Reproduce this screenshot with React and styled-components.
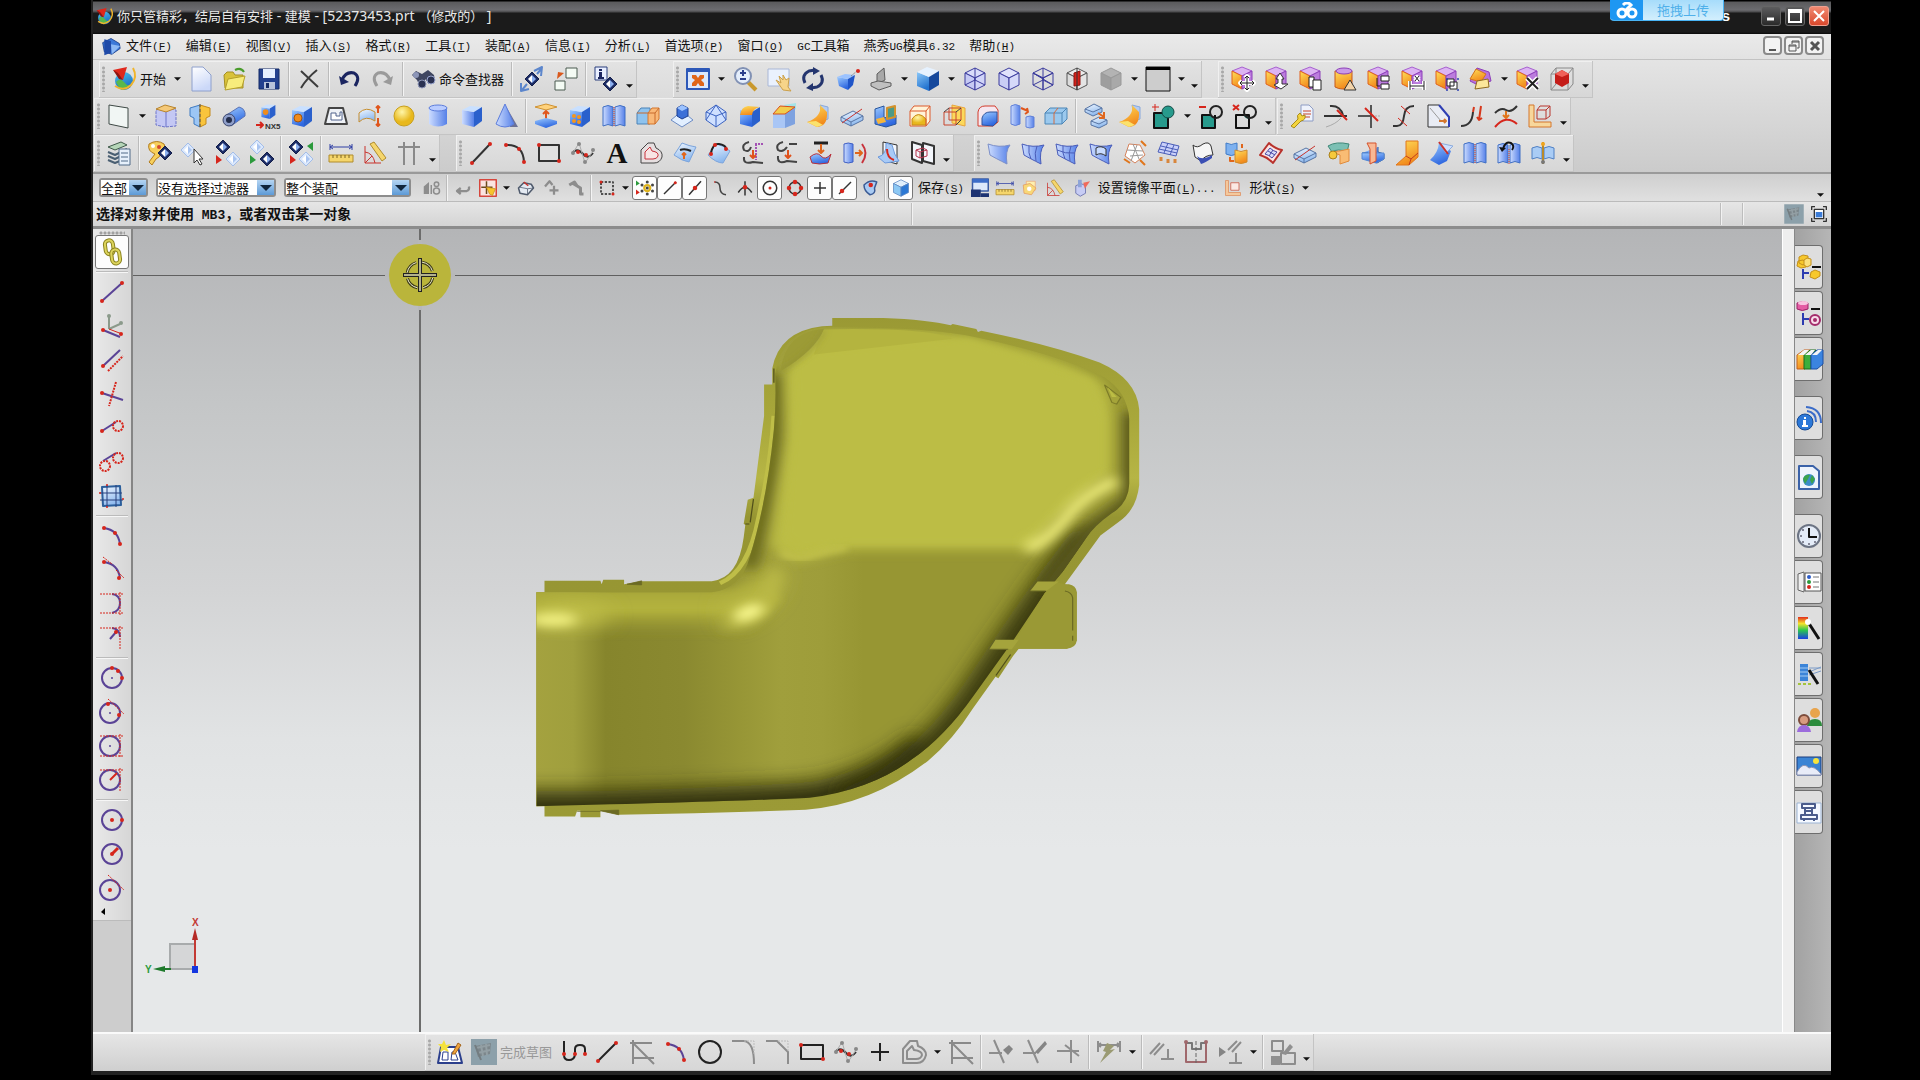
import React from 'react'
import styled, { createGlobalStyle, css } from 'styled-components'

const GlobalStyle = createGlobalStyle`
  * { box-sizing: border-box; }
  body {
    margin: 0;
    background: #000;
    color: #111;
    font-family: "Noto Sans CJK SC", sans-serif;
    font-size: 13px;
    line-height: 20px;
  }
  button, select { font: inherit; color: inherit; }
`

/* ---------- frame ---------- */

const Page = styled.div`
  display: flex;
  flex-direction: column;
  min-height: 100vh;
  padding: 0 89px 5px 91px;
`

const Frame = styled.div`
  position: relative;
  flex: 1;
  display: flex;
  flex-direction: column;
  border: solid #222;
  border-width: 0 0 4px 2px;
  background: #d8d8d8;
`

const TitleBar = styled.header`
  display: flex;
  align-items: center;
  height: 34px;
  padding: 0 2px 2px 3px;
  gap: 4px;
  color: #e8e8e8;
  background: linear-gradient(#000 1px, #5a5a5c 2px, #6c6c70 10px, #4a4a4c 12px, #1b1b1b 13px, #1b1b1b 32px, #0a0a0a);
`

const Title = styled.h1`
  flex: 1;
  margin: 0;
  font-size: 13px;
  font-weight: 400;
  line-height: 20px;
  white-space: pre;
`

const TitleLatin = styled.span`
  font-family: "Noto Sans", sans-serif;
  font-size: 14px;
`

const Upload = styled.button`
  position: absolute;
  top: 0;
  right: 107px;
  display: flex;
  width: 114px;
  height: 21px;
  padding: 0;
  border: 1px solid #49b4f5;
  border-width: 0 1px 1px 0;
  border-radius: 0 0 4px 4px;
  overflow: hidden;
  color: #4fb0ea;
  background: linear-gradient(#a6dcfb, #d3effd);
  line-height: 19px;
`

const UploadLogo = styled.span`
  display: grid;
  place-items: center;
  width: 33px;
  height: 21px;
  margin-right: 14px;
  background: #1e97f2;
`

const Tail = styled.span`
  margin-right: 27px;
  font: bold 15px/20px "Liberation Sans", sans-serif;
  color: #fff;
`

const WinButton = styled.button`
  display: grid;
  place-items: center;
  width: 20px;
  height: 20px;
  margin-left: 0;
  padding: 0;
  border: 1px solid ${p => p.$close ? '#f0a090' : '#666'};
  border-radius: 3px;
  background: ${p => p.$close ? 'linear-gradient(#f08a72, #d9482c)' : 'linear-gradient(#5c5c5e, #2a2a2a)'};
`

const MdiButton = styled(WinButton)`
  width: 19px;
  height: 19px;
  margin: 0 0 0 2px;
  border: 2px solid #8a8a8a;
  border-radius: 4px;
  background: #f3f3f3;
`

const MenuBar = styled.nav`
  display: flex;
  align-items: center;
  height: 26px;
  padding: 0 7px 2px 8px;
  border-bottom: 1px solid #c2c2c2;
  background: linear-gradient(#eaeaea, #e2e2e2);
`

const MenuItem = styled.button`
  height: 22px;
  margin-left: ${p => p.$first ? 5 : 14}px;
  padding: 0;
  border: 0;
  background: none;
  white-space: pre;
`

const Spacer = styled.div`
  flex: 1;
`

const Latin = styled.span`
  font-family: "Liberation Mono", monospace;
  font-size: ${p => p.$big ? 13 : 11}px;
  white-space: pre;
`

/* ---------- tool bars ---------- */

const Rows = styled.div`
  padding-top: 1px;
  background: linear-gradient(#e4e4e4, #cbcbcb);
  border-bottom: 2px solid #9a9a9a;
`

const Row = styled.div`
  display: flex;
  height: 37px;
  padding-left: ${p => p.$pad || 0}px;
`

const Group = styled.div`
  display: flex;
  align-items: center;
  margin-left: ${p => p.$gap || 1}px;
  border: solid #c4c4c4;
  border-width: 0 1px 1px 0;
  box-shadow: inset 1px 1px #f0f0f0;
  background: linear-gradient(#e3e3e3, #d7d7d7);
`

const Grip = styled.span`
  width: 8px;
  height: 26px;
  background: radial-gradient(circle, #a8a8a8 1px, transparent 2px) 2px 0 / 5px 4px repeat-y;
`

const Sep = styled.span`
  width: 2px;
  height: ${p => p.$short ? 26 : 34}px;
  margin: 0 2px;
  border-left: 1px solid #bbb;
  border-right: 1px solid #f4f4f4;
`

const Tool = styled.button`
  display: flex;
  align-items: center;
  justify-content: center;
  width: ${p => p.$text ? 'auto' : p.$small ? '25px' : '34px'};
  height: ${p => p.$small ? 24 : 34}px;
  padding: 0 ${p => p.$text && !p.$small ? 5 : 0}px;
  border: ${p => p.$on ? '1px solid #777' : '0'};
  border-radius: 3px;
  background: ${p => p.$on ? '#fdfdfd' : 'none'};
  color: ${p => p.$dim ? '#999' : '#111'};
  white-space: pre;
  svg { flex: none; }
  ${p => p.$text && p.$small && css`
    padding: 0 4px;
  `}
`

const Drop = styled.button`
  display: flex;
  align-items: ${p => p.$low ? 'flex-end' : 'center'};
  justify-content: center;
  width: 13px;
  height: 26px;
  padding: 0 0 ${p => p.$low ? 4 : 0}px;
  border: 0;
  background: none;
`

const Caption = styled.span`
  margin-left: ${p => p.$gap || 4}px;
`

const SelectBar = styled.div`
  display: flex;
  align-items: center;
  height: 28px;
  padding: 0 4px 0 6px;
  border-bottom: 1px solid #bbb;
  background: linear-gradient(#cfcfcf, #e0e0e0);
`

const Combo = styled.label`
  display: flex;
  width: ${p => p.$w}px;
  height: 19px;
  margin-right: 8px;
  border: 2px solid #8d8d8d;
  border-radius: 3px;
  background: #fff;
`

const Select = styled.select`
  flex: 1;
  min-width: 0;
  padding: 0;
  border: 0;
  background: #fff;
  appearance: none;
  line-height: 15px;
`

const ComboArrow = styled.span`
  display: grid;
  place-items: center;
  width: 17px;
  background: linear-gradient(#b5d5f3, #5d9ad6);
`

const StatusBar = styled.div`
  display: flex;
  align-items: center;
  height: 24px;
  padding: 0 0 0 3px;
  background: linear-gradient(#e6e6e6, #d4d4d4);
  font-size: 14px;
  font-weight: 700;
`

const Prompt = styled.div`
  width: 47%;
  white-space: pre;
`

const Divider = styled.span`
  width: 2px;
  height: 22px;
  margin-right: ${p => p.$after || 0}px;
  border-left: 1px solid #bdbdbd;
  border-right: 1px solid #f2f2f2;
`

/* ---------- work area ---------- */

const Work = styled.main`
  flex: 1;
  display: flex;
  border-top: 3px solid #8c8c8c;
`

const Side = styled.aside`
  width: 40px;
  border-right: 2px solid #858585;
  background: #cdcdcd;
`

const SideTools = styled.div`
  display: flex;
  flex-direction: column;
  align-items: center;
  padding: 2px 1px 5px 0;
  border-bottom: 1px solid #bbb;
  background: linear-gradient(90deg, #e9e9e9, #d6d6d6);
`

const SideGrip = styled.span`
  width: 26px;
  height: 4px;
  background: radial-gradient(circle, #a0a0a0 1px, transparent 2px) 0 0 / 4px 4px repeat-x;
`

const SideSep = styled.span`
  width: 32px;
  height: 2px;
  margin: 2px 0;
  border-top: 1px solid #bbb;
  border-bottom: 1px solid #f6f6f6;
`

const SideMore = styled.div`
  align-self: flex-start;
  padding-left: 8px;
  height: 10px;
  line-height: 10px;
`

const Canvas = styled.section`
  position: relative;
  flex: 1;
  overflow: hidden;
  background: linear-gradient(#b4b5b7, #c4c6c7 175px, #d3d4d5 360px, #e1e3e4 510px, #e6e8e9 620px);
`

const LineV = styled.div`
  position: absolute;
  top: 0;
  bottom: 0;
  left: 286px;
  width: 2px;
  background: #6c6c6c;
`

const LineH = styled.div`
  position: absolute;
  left: 0;
  right: 0;
  top: 46px;
  height: 1px;
  background: #606060;
`

const Part = styled.svg`
  position: absolute;
  left: 387px;
  top: 72px;
`

const Pointer = styled.svg`
  position: absolute;
  left: 252px;
  top: 11px;
`

const Triad = styled.svg`
  position: absolute;
  left: 10px;
  bottom: 56px;
`

const Strip = styled.div`
  width: 13px;
  border-left: 1px solid #fff;
  border-right: 1px solid #888;
  background: #eee;
`

const Tabs = styled.aside`
  display: flex;
  flex-direction: column;
  align-items: flex-start;
  gap: 2px;
  width: 36px;
  padding-top: 16px;
  background: linear-gradient(90deg, #a2a2a2, #b6b6b6);
`

const Tab = styled.button`
  display: grid;
  place-items: center;
  width: 28px;
  height: 44px;
  margin-bottom: ${p => p.$last ? 13 : 0}px;
  padding: 0;
  border: solid #6e6e6e;
  border-width: 1px 1px 1px 0;
  border-radius: 0 4px 4px 0;
  background: #dedede;
`

const Bottom = styled.footer`
  display: flex;
  height: 39px;
  padding-left: 331px;
  border-top: 2px solid #fafafa;
  background: linear-gradient(#e6e6e6, #cfcfcf);
`

/* ---------- drawing helpers ---------- */

const P = ({ d, f = 'none', s = 'none', w = 1, dash }) => (
  <path d={d} fill={f} stroke={s} strokeWidth={w} strokeDasharray={dash} strokeLinejoin='round' />
)
const O = ({ x = 12, y = 12, r = 9, f = 'none', s = 'none', w = 1, dash }) => (
  <circle cx={x} cy={y} r={r} fill={f} stroke={s} strokeWidth={w} strokeDasharray={dash} />
)
const Dots = ({ at, c = '#d6261c', r = 2 }) => at.map(([x, y]) => (
  <circle key={x + '-' + y} cx={x} cy={y} r={r} fill={c} />
))
const Iso = ({ t, l, r, s }) => (
  <>
    <P d='M12 1L22 6 12 11 2 6z' f={t} s={s} />
    <P d='M2 6L12 11V23L2 18z' f={l} s={s} />
    <P d='M22 6L12 11V23L22 18z' f={r} s={s} />
  </>
)
const Box = ({ l = 'url(#blue)', r = '#2a60cc', t = '#c9e0ff' }) => (
  <>
    <P d='M2 6L14 8V23L2 20z' f={l} />
    <P d='M2 6L10 2 22 3 14 8z' f={t} />
    <P d='M14 8L22 3V17L14 23z' f={r} />
  </>
)
const Synch = ({ children }) => (
  <>
    <P d='M11 0L21 4 11 9 1 4z' f='#dcb4f2' s='#a65fd0' />
    <P d='M1 4L11 9V22L1 17z' f='url(#orange)' s='#e0601c' />
    <P d='M21 4L11 9V22L21 17z' f='#bb7cdd' s='#8d3fba' />
    {children}
  </>
)
const Over = ({ d, w = 2 }) => (
  <>
    <P d={d} s='#fff' w={w + 3} />
    <P d={d} s='#222' w={w} />
  </>
)
const Diamond = ({ x = 0, y = 0, pale }) => (
  <g transform={`translate(${x} ${y})`}>
    <P d='M6 -1L13 6 6 13 -1 6z' f={pale ? '#dbe8fc' : '#1c2c66'} s={pale ? '#a3bde8' : '#141f4a'} />
    <P d='M6 2V10L2 6z' f='#fff' />
    <P d='M6 2V10L10 6z' f={pale ? '#a9c4f0' : '#8cb0f0'} />
  </g>
)
const Axes = '#5a4396'
const Red = '#d6261c'
const Gray = '#8d8d8d'

const ICONS = {
  logo: <><O x={12} y={14} r={9} f='url(#globe)' /><P d='M4 15Q8 10 12 15T19 18Q14 24 8 22z' f='#58b84c' /><P d='M1 3L15 0 11 13z' f='#e0281c' /><P d='M1 3L7 12 11 13 6 6z' f='#8e1410' /><P d='M21 1Q26 10 19 18 12 25 3 19' s='#f0b52c' w={2} /></>,
  doc: <P d='M3 0H14L22 8V24H3z' f='url(#paper)' s='#8ea0cc' />,
  open: <><P d='M1 8L4 5H10L12 8H20V21H2z' f='#d9c23a' s='#a58f22' /><P d='M5 12L22 9 19 20 2 23z' f='#f7ec7c' s='#b5a02a' /><P d='M12 3Q18 0 21 5' s='#4a9c2c' w={2} /></>,
  save: <><P d='M2 2H22V22H2z' f='#23408e' s='#152a66' /><P d='M6 2H18V11H6z' f='#e6efff' /><P d='M7 15H18V22H7z' f='#b9c3da' /><P d='M9 16H12V21H9z' f='#152a66' /></>,
  cut: <><P d='M4 4L21 20M20 3Q10 11 4 21' s='#3c3c3c' w={2} /></>,
  undo: <><P d='M5 13Q9 4 17 6 24 10 18 19' s='#1b2560' w={3} /><P d='M2 9L4 18 12 15z' f='#1b2560' /></>,
  redo: <><P d='M19 13Q15 4 7 6 0 10 6 19' s='#9a9a9a' w={3} /><P d='M22 9L20 18 12 15z' f='#9a9a9a' /></>,
  find: <><P d='M1 8L5 4 11 7 17 3 23 8 24 14 18 17 14 12 14 19 9 20 6 13z' f='#3f4660' /><O x={5} y={8} r={3} f='#8d96b8' /><O x={11} y={17} r={4} f='#2b3252' s='#8d96b8' /><O x={20} y={13} r={4} f='#2b3252' s='#9aa6d0' /></>,
  reattach: <><Diamond x={6} y={6} /><P d='M14 4L22 0 21 9M1 16L1 24 9 22M17 7L22 1M2 23L7 17' s='#5c86cc' w={2} /></>,
  swap: <><P d='M12 1H23V11H12z' f='#f4fbf4' s='#4a5a50' /><P d='M1 14H11V23H1z' f='#f4fbf4' s='#4a5a50' /><P d='M3 12L10 6 4 5z' f='#d9581c' /></>,
  info: <><P d='M1 0H13V13H1z' f='#e8eeff' s='#2b3f7c' /><P d='M5 2H8V4H5zM5 5H8V10H10V12H4V10H5z' f='#1b2560' /><Diamond x={10} y={11} /></>,
  fit: <><P d='M1 2H23V22H1z' f='#dce8fc' s='#2d58b8' w={2} /><P d='M1 1H23V5H1z' f='#2d58b8' /><P d='M6 8H10L12 11 14 8H18V11L15 13 18 16V19H14L12 16 10 19H6V16L9 13 6 11z' f='#e0661a' /></>,
  zoom: <><P d='M15 15L23 23' s='#c9982c' w={4} /><O x={10} y={9} r={8} f='#e4eefc' s='#8191b4' w={2} /><P d='M10 3V9M7 6H13M7 12H13' s='#2b3f8c' w={2} /></>,
  pan: <><P d='M1 2H22V19H1z' f='#eaf1fd' s='#a9b7d6' /><P d='M9 13L14 16 12 9 16 13 16 8 19 13 22 11 21 20 24 24 16 23z' f='#f7d489' s='#cba04c' /></>,
  rotate: <><P d='M4 16Q0 8 8 4L14 3M20 8Q24 16 16 20L10 21' s='#24356e' w={3} /><P d='M12 0L19 4 12 8zM12 16L5 21 12 24z' f='#24356e' /></>,
  boxdot: <><P d='M2 10L13 12V23L4 19z' f='url(#blue)' /><P d='M2 10L10 7 20 8 13 12z' f='#9cc3ff' /><P d='M13 12L20 8 18 18 13 23z' f='#1f55c8' /><P d='M16 9L22 4' s='#888' dash='2 1' /><Dots at={[[23, 4]]} /></>,
  persp: <><P d='M8 7L15 1 16 13 8 17z' f='#a8a8a8' s='#5c5c5c' /><P d='M2 16L9 14 22 16V19L10 23 2 19z' f='#c0c0c0' s='#5c5c5c' /></>,
  shaded: <><P d='M1 5L13 10V24L1 19z' f='url(#blueD)' /><P d='M1 5L11 0 23 4 13 10z' f='#e6f2ff' /><P d='M13 10L23 4V18L13 24z' f='#15489c' /></>,
  wireA: <><Iso t='#d9dcfa' l='#c6caf4' r='#d0d4f8' s='#3a3a9c' /><P d='M2 18L12 13 22 18M12 1V13' s='#3a3a9c' /></>,
  wireB: <Iso t='#e0e2fb' l='#c9cdf5' r='#d6d9f9' s='#3a3a9c' />,
  wireC: <><Iso t='none' l='none' r='none' s='#3a3a9c' /><P d='M2 18L12 13 22 18M12 1V13M2 6L22 18' s='#3a3a9c' /></>,
  section: <><Iso t='#ececec' l='#dcdcdc' r='#e4e4e4' s='#555' /><P d='M9 6L15 4V18L9 19z' f='#d42018' s='#8e1410' /><P d='M12 1V23' s='#333' /></>,
  grayCube: <Iso t='#b3b3b3' l='#9e9e9e' r='#a9a9a9' s='#999' />,
  blackFrame: <><P d='M0 0H24V24H0z' f='#cdcdcd' s='#111' /><P d='M0 0H24V3H0z' f='#000' /></>,
  sMove: <Synch><Over w={1} d='M16 9V23M9 16H23M14 11L16 9 18 11M14 21L16 23 18 21M11 14L9 16 11 18M21 14L23 16 21 18' /></Synch>,
  sPull: <Synch><P d='M15 6L19 12H17V17H23L16 22 9 18 13 16V12H11z' f='#fff' s='#333' /></Synch>,
  sCopy: <Synch><P d='M10 10H15V13H22V23H14V20H10z' f='#fff' s='#222' /><P d='M14 20V13H15' s='#222' /></Synch>,
  sCyl: <><P d='M2 4V20Q9 24 19 20V4z' f='url(#orange)' s='#c5591a' /><ellipse cx='11' cy='4' rx='8' ry='3' fill='#c99ae8' stroke='#8d3fba' /><P d='M17 13L23 23H11z' f='#f3d3a8' s='#333' /></>,
  sReplace: <Synch><P d='M14 9H22V14H14zM14 17H22V22H14z' f='#fff' s='#222' /><P d='M10 11V19H13' s='#222' /></Synch>,
  sDim: <Synch><Over w={1} d='M9 14V23M23 14V23M9 19H23M14 9L18 14M18 9L14 14' /></Synch>,
  sPattern: <Synch><P d='M12 12H19V19H12zM15 15H22V22H15z' f='#fff' s='#222' /><Dots at={[[12, 12], [23, 12], [12, 23], [23, 23]]} c='#2c3fb0' r={1} /></Synch>,
  sTilt: <><P d='M8 1L20 5 22 14 9 18 1 14z' f='#b872dc' s='#8d3fba' /><P d='M7 2L17 7 12 15 1 12z' f='url(#orange)' s='#d4741c' /><P d='M8 14L19 12 20 20 6 22z' f='#fbe69a' s='#8f6a1c' /></>,
  sDel: <Synch><Over d='M11 11L22 22M22 11L11 22' /></Synch>,
  sRed: <><P d='M6 1H23V17L18 23H1V7z' f='none' s='#888' /><P d='M1 7H18V23M18 7L23 1M6 1V17L1 23' s='#888' /><P d='M5 7L12 3 19 7V16L12 20 5 16z' f='#c41c18' /><P d='M5 7L12 3 19 7 12 10z' f='#f06058' /></>,

  sheet: <P d='M2 1L21 4V24L2 20z' f='#f1f6f4' s='#3f4a46' />,
  extrude: <><P d='M2 6L14 3 22 6V22L11 23 2 21z' f='#c4c8f4' s='#6d74c9' dash='3 1' /><P d='M2 5L11 1 22 4 12 8z' f='#f5c978' s='#b8842c' /><P d='M12 8V23' s='#6d74c9' /></>,
  revolve: <><P d='M2 4L12 1V23L6 20V14L2 12z' f='#9cc6f5' s='#3f7bc2' /><P d='M12 1L22 4V12L18 14V20L12 23z' f='#f9c43c' s='#c38a1c' /><P d='M12 0V24' s='#555' dash='3 2' /></>,
  tube: <><P d='M3 12L17 3Q24 5 23 12L9 22z' f='url(#blue)' s='#5b73b4' /><O x={7} y={16} r={6} f='#8e9ec9' s='#39446b' /><O x={7} y={16} r={3} f='#222c4a' /></>,
  nx5: <><g transform='translate(4 -1) scale(.7)'><Box /><O x={8} y={13} r={4} f='#f08c1c' /></g><P d='M0 21H6M4 18L7 21 4 24' s={Red} w={2} /><text x='9' y='25' fontSize='8' fontWeight='700' fontFamily='Liberation Sans, sans-serif' fill='#333'>NX5</text></>,
  holeBox: <><Box /><O x={8} y={14} r={4} f='#f08c1c' s='#a4550c' /></>,
  emboss: <><P d='M5 4H19L23 20H1z' f='#eef1f6' s='#444' w={2} /><P d='M7 9H12V12H16V8H18V16H7z' f='#fff' s='#50628c' /></>,
  offset: <><P d='M1 9Q8 2 17 8V17Q8 11 1 18z' f='url(#paleblue)' s='#c78d2c' /><P d='M20 9V2M18 4L20 2 22 4M20 14V22M18 20L20 22 22 20' s='#e0561c' w={2} /></>,
  sphere: <O r={10} f='url(#ball)' s='#c9a01c' />,
  cylinder: <><P d='M3 4V20Q12 25 21 20V4z' f='url(#blueH)' /><ellipse cx='12' cy='4' rx='9' ry='3' fill='#b9ccff' stroke='#5c7ddc' /></>,
  block: <Box l='url(#blueH)' />,
  cone: <><P d='M13 4L24 23H16z' f='#6b7196' /><P d='M11 0L20 20Q11 26 2 20z' f='url(#blueH)' s='#5c7ddc' /></>,
  pullup: <><P d='M1 3L12 0 23 3 12 6z' f='#ffd27c' s='#cf9232' /><P d='M12 15V7M9 10L12 7 15 10' s='#e0561c' w={2} /><P d='M1 17L12 14 23 17V20L12 24 1 20z' f='url(#blue)' /></>,
  boxholes: <><Box /><Dots at={[[6, 12], [11, 13], [6, 17], [11, 18]]} c='#f5961c' /></>,
  sew: <><P d='M1 3Q6 0 11 3V22Q6 19 1 22z' f='url(#blueH)' s='#3f6fc4' /><P d='M13 3Q18 0 23 3V22Q18 19 13 22z' f='url(#blueH)' s='#3f6fc4' /><P d='M12 3V23' s='#d63a2c' dash='1 1' /></>,
  split: <><P d='M1 9L5 4H14V20H1z' f='#8fc3ee' s='#4a83b8' /><P d='M12 9L16 4H23V15L19 20H12z' f='#f9b878' s='#d4762c' /><P d='M1 9H19V20M19 9L23 4' s='#c96a2c' /></>,
  pocket: <><P d='M12 7L23 16 12 23 1 16z' f='#e2efff' s='#6d8cc4' /><P d='M7 4L12 1 18 4V12L12 15 7 12z' f='#3b70d8' s='#1d3f90' /><P d='M7 4L12 1 18 4 12 7z' f='#9cc3ff' /></>,
  gem: <><P d='M12 1L22 8V16L12 23 2 16V8z' f='#cfe0ff' s='#3b62c0' /><P d='M2 8L12 12 22 8M12 12V23M2 16L12 1 22 16' s='#3b62c0' /></>,
  blend: <><Box /><P d='M2 11Q3 3 10 2L22 3Q15 4 14 11z' f='url(#orange)' /></>,
  chamfer: <><P d='M12 1L24 -1V5L18 9z' f='#a4e4e8' /><P d='M1 10H13V24H1z' f='#a9c6f5' /><P d='M13 10L23 3V20L13 24z' f='#7ea2e0' /><P d='M1 10L8 2 23 3 13 10z' f='#f3cd4c' s='#d8501c' /></>,
  sweep: <><P d='M14 1L22 3V15L17 17z' f='#b4ccf2' s='#88a8dc' /><P d='M14 1Q16 13 1 18L11 23Q22 22 21 8z' f='url(#orange)' /><P d='M1 18L10 17 17 21 11 23z' f='#fbe26c' /></>,
  trim: <><P d='M1 13L13 7 23 12V16L11 22 1 17z' f='url(#paleblue)' s='#5674a4' /><P d='M1 13L11 18 23 12M11 18V22' s='#5674a4' /><P d='M2 19L22 5' s='#c8322c' w={1} /></>,
  sub: <><P d='M1 5L10 2V14L22 11V20L12 23 1 20z' f='url(#blue)' s='#28559c' /><P d='M13 4L21 2V13L13 15z' f='#4c9a86' s='#d4922c' w={2} /><P d='M2 15L10 13 12 18 4 20z' f='#f5b53c' /></>,
  domeA: <><P d='M2 7L6 2H22V17L18 22H2z' f='#fff3d8' s='#dd5a2c' /><P d='M4 21V15Q10 6 18 15V21z' f='url(#ball)' s='#c88a1c' /><P d='M2 7H18V22M18 7L22 2' s='#dd5a2c' /></>,
  domeB: <><P d='M10 1L23 4V22L10 19z' f='#fbd95c' s='#e8a43c' /><P d='M2 8H14V21H2zM7 4H19V16H7z' f='none' s='#c8442c' /><P d='M2 8L7 4M14 8L19 4M14 21L19 16' s='#444' /></>,
  domeC: <><P d='M2 8Q3 2 9 2H19L22 6V18L17 22H2z' f='#f5e7ef' s='#d33c2c' /><P d='M6 21V14Q8 8 14 8H21V18L17 22z' f='url(#blue)' s='#31549c' /></>,
  cylPair: <><P d='M1 2Q5 -1 10 2V20Q5 23 1 20z' f='url(#blueH)' s='#6080d8' /><P d='M16 13Q20 11 24 13V23Q20 25 16 23z' f='url(#blueH)' s='#6080d8' /><P d='M11 4L18 7M15 10L18 8 17 4' s='#e0561c' w={2} /></>,
  slab: <><P d='M1 9L6 4H23V15L18 20H1z' f='#9bc9ee' s='#4d86b6' /><P d='M1 9H18V20M18 9L23 4' s='#4d86b6' /><P d='M10 20V9L14 4' s='#d66a3c' /></>,
  slabs: <><P d='M1 5L10 0 18 4V8L9 12 1 8z' f='url(#paleblue)' s='#5674a4' /><P d='M7 17L15 13 23 16V20L15 24 7 21z' f='url(#paleblue)' s='#5674a4' /><P d='M1 5L9 8 18 4M7 17L15 20 23 16' s='#5674a4' /><P d='M14 9L20 13M20 8V14H15' s='#e0661c' w={2} /></>,
  unite: <><P d='M2 9H16V24H2z' f='#279a8c' s='#111' w={2} /><O x={16} y={8} r={6} f='#279a8c' s='#134a44' /><P d='M0 3H7M3 0V7' s={Red} w={1} /></>,
  minus: <><P d='M3 11H16V24H3z' f='#279a8c' s='#111' w={2} /><O x={17} y={8} r={6} f='#d8d8d8' s='#222' w={2} /><P d='M16 11V14' s='#111' w={2} /><P d='M0 3H7' s={Red} w={2} /></>,
  inter: <><P d='M16 11V15Q11 14 11 11z' f='#279a8c' /><P d='M3 11H16V24H3z' s='#111' w={2} /><O x={17} y={8} r={6} s='#222' w={2} /><P d='M0 1L6 6M6 1L0 6' s={Red} w={2} /></>,
  wrench: <><P d='M11 1H19L23 5V17H11z' f='#eef2fb' s='#8d9cc4' /><P d='M13 7H21M13 10H21M13 13H20' s='#c8442c' /><P d='M1 22L8 15Q6 11 10 9L12 12 15 11Q16 16 11 17L4 24z' f='#f3d43c' s='#a88a1c' /></>,
  crvA: <><P d='M0 12H23' s='#333' w={2} /><P d='M6 2Q16 1 19 11' s='#333' w={2} /><P d='M2 23Q12 20 17 14' s='#aaa' /><P d='M13 6L23 16' s={Red} w={2} /></>,
  crvB: <><P d='M0 12H14M13 1V24' s='#555' w={2} /><P d='M14 12H23' s='#aaa' dash='2 1' /><P d='M7 4L20 17' s={Red} w={2} /></>,
  crvC: <><P d='M1 22H5Q11 22 12 12 13 2 22 2' s='#333' w={2} /><P d='M9 2L18 10M6 14L15 22' s={Red} /></>,
  crvD: <><P d='M2 1H13L23 13V23H2z' f='#e9ecf4' s='#333' /><P d='M13 1L23 13V23' s='#2f3fb4' w={2} /><P d='M4 4L15 17' s='#999' /><P d='M13 17H20M18 15L20 17 18 19' s='#d4762c' w={2} /></>,
  crvE: <><P d='M1 22Q12 22 13 8' s='#333' w={2} /><P d='M13 8L14 3M19 16L21 2M17 13L19 16 22 14' s='#d6381c' w={2} /></>,
  crvF: <><P d='M1 9Q7 3 12 6T23 2' s='#333' w={2} /><P d='M1 23Q12 10 23 20' s={Red} w={2} /><P d='M12 7V14M9 11L12 14 15 11' s='#e0761c' w={2} /></>,
  crvG: <><P d='M1 1V23H23V18H6V1z' f='#f7d79c' s='#d4762c' /><P d='M9 6H18V15H9zM12 2H22V12M9 6L12 2M18 6L22 2M18 15L22 12' f='none' s='#b8342c' /></>,

  layers: <><P d='M1 6L14 1 20 4 8 9z' f='#b5d6b8' s='#3f5a4a' /><P d='M1 11L8 14 20 8M1 15L8 18 20 12M1 19L8 22 20 17' s='#4a5f72' w={2} /><P d='M12 8H23V24H12z' f='#e6f0fb' s='#516a88' /><P d='M14 12H21M14 16H21M14 20H21' s='#516a88' /></>,
  visual: <><P d='M2 3Q10 -2 17 3 20 8 13 12 14 16 9 18L5 24 2 21 8 13Q0 10 2 3z' f='#f6cf5c' s='#b37c1c' /><Dots at={[[6, 5]]} c='#fff' /><Dots at={[[12, 6]]} c='#d6482c' /><Diamond x={12} y={6} /></>,
  select: <><Diamond x={1} y={3} pale /><P d='M13 8L22 18H18L21 23 19 24 16 19 13 22z' f='#fff' s='#333' /></>,
  hideA: <><Diamond x={2} y={0} /><Diamond x={12} y={12} pale /><P d='M1 14L7 19 1 23z' f={Red} /></>,
  hideB: <><Diamond x={2} y={0} pale /><Diamond x={12} y={12} /><P d='M1 14L7 19 1 23z' f='#2c9a3c' /></>,
  hideC: <><Diamond x={1} y={0} /><Diamond x={11} y={12} pale /><P d='M1 14L7 19 1 23z' f={Red} /><P d='M24 1L18 5 24 10z' f='#2c9a3c' /></>,
  ruler: <><P d='M0 14H24V21H0z' f='#f5d66c' s='#b08c2c' /><P d='M4 14V17M8 14V17M12 14V17M16 14V17M20 14V17' s='#7c6420' /><P d='M1 6H23M1 3V9M23 3V9M4 4L1 6 4 8M20 4L23 6 20 8' s='#2f3fa4' /></>,
  angle: <><P d='M7 3L11 1 23 17 19 20z' f='#f5d66c' s='#b08c2c' /><P d='M2 5V22H18M2 11Q10 12 12 22M2 22L9 15' s='#c8322c' /></>,
  grid: <P d='M7 1V24M17 1V24M1 6H23' s='#8a8a8a' w={2} />,
  line: <><P d='M3 22L21 3' s='#333' w={2} /><Dots at={[[3, 22], [21, 3]]} /></>,
  arc: <><P d='M3 4Q20 3 21 21' s='#333' w={2} /><Dots at={[[3, 4], [16, 8], [21, 21]]} /></>,
  rect: <><P d='M2 4H22V20H2z' f='#e0e0e0' s='#333' w={2} /><Dots at={[[2, 4], [22, 20]]} /></>,
  spline: <><P d='M2 11Q7 7 12 13T22 12' s='#333' w={2} /><P d='M2 12L8 2 11 12 14 22 22 10' s='#aaa' /><Dots at={[[7, 11], [15, 14]]} /><Dots at={[[8, 3], [14, 21], [22, 9], [2, 12]]} c='#888' /></>,
  text: <text x='12' y='22' textAnchor='middle' fontFamily='Liberation Serif, serif' fontWeight='700' fontSize='29' fill='#111'>A</text>,
  offsetCrv: <><P d='M2 22V9L9 2H15L17 7Q24 10 23 16 21 22 15 22z' f='#e6dfe0' s='#444' /><P d='M6 18V11L11 6 13 10Q20 11 19 15 18 18 14 18z' f='#f8e4e4' s='#c8323c' /></>,
  projA: <><P d='M1 14L9 2Q16 5 23 6L16 21Q9 20 1 14z' f='url(#paleblue)' s='#7ca4dc' /><P d='M7 9Q12 7 18 10' s='#222' w={2} /><P d='M11 18V12M9 14L11 12 13 14' s='#e0661c' w={2} /></>,
  projB: <><P d='M1 14L9 3Q16 4 23 10L16 22Q9 22 1 14z' f='url(#paleblue)' s='#7ca4dc' /><P d='M4 12Q6 2 12 3T19 7' s='#222' w={2} /><Dots at={[[4, 13], [8, 4], [19, 8]]} /></>,
  projC: <><P d='M8 1Q0 3 3 9 8 12 10 6M3 16Q2 24 12 21L22 22' s='#444' w={2} /><P d='M14 3H22M15 3V19' s='#a452b4' dash='2 1' w={2} /><P d='M12 9V17M9 14L12 17 15 14' s='#e0521c' w={2} /></>,
  projD: <><P d='M8 1Q0 3 3 9 8 12 12 6M3 15Q2 24 12 20L22 21M14 3H22' s='#444' w={2} /><P d='M13 9V17M10 14L13 17 16 14' s='#e0521c' w={2} /></>,
  press: <><P d='M5 2H19' s='#222' w={3} /><P d='M12 3V12M9 9L12 12 15 9' s='#e0661c' w={2} /><P d='M1 16Q8 10 12 15T22 13L19 22Q10 24 3 22z' f='url(#blue)' s='#b8323c' /></>,
  cylArc: <><P d='M1 3Q5 1 10 3V21Q5 23 1 21z' f='url(#blueH)' s='#3f5fc4' /><P d='M12 12H18M16 9L19 12 16 15' s='#e0661c' w={2} /><P d='M19 3Q26 12 19 22' s='#c8323c' w={2} /></>,
  planeA: <><P d='M6 1L20 4V23L6 19z' f='#f3f6fb' s='#333' /><P d='M1 16Q10 14 9 2L15 4Q17 14 22 20L8 22z' f='#a8caf6' s='#6b98dc' /><P d='M10 8Q10 17 17 19' s={Red} w={2} /></>,
  planeB: <><P d='M1 1L11 4V22L1 18z' f='#f3f6fb' s='#333' w={2} /><P d='M12 2L23 5V23L12 20z' f='#f3f6fb' s='#333' w={2} /><P d='M5 9L12 7 16 9V15L9 17 5 15zM5 9L9 11 16 9M9 11V17' f='none' s='#b8324c' /></>,
  surfA: <P d='M1 3Q12 7 23 4 18 10 20 23 8 17 3 14z' f='url(#blueH)' s='#7d90c8' />,
  surfB: <><P d='M1 3Q12 7 23 4 18 10 20 23 8 17 3 14z' f='url(#blueH)' s='#4a5db8' /><P d='M8 5Q7 12 10 18M16 5Q13 12 15 20' s='#4a5db8' /></>,
  surfC: <><P d='M1 3Q12 7 23 4 18 10 20 23 8 17 3 14z' f='url(#blueH)' s='#4a5db8' /><P d='M8 5Q7 12 10 18M16 5Q13 12 15 20M2 9Q10 13 20 12' s='#4a5db8' /></>,
  surfD: <><P d='M1 3Q12 7 23 4 18 10 20 23 8 17 3 14z' f='url(#blueH)' s='#4a5db8' /><P d='M7 7Q12 4 17 8V15Q12 11 7 14z' f='#c9dcff' s='#333' /></>,
  mesh: <><P d='M6 3L17 4 22 14 12 22 2 15z' f='#fff' s='#d4825c' /><P d='M10 3L16 18M4 9L20 10M7 15L20 14M14 4L8 20' s='#999' /><P d='M1 18L7 22M17 19L22 24M18 0L23 5' s='#e0761c' w={2} /></>,
  meshB: <><P d='M5 1L22 5 19 15 1 11z' f='#c9d0fa' s='#4a5db8' /><P d='M11 2L7 12M17 4L13 14M4 5L21 9M2 8L20 12' s='#4a5db8' /><P d='M4 16V20M11 18V22M18 18V22' s='#d8863c' w={3} /></>,
  scroll: <><P d='M2 4Q6 8 12 3 18 0 20 5L22 14Q14 14 10 20L4 16z' f='#f6f6f6' s='#333' /><P d='M6 15Q11 20 21 14V17Q14 22 10 23z' f='#3b4fb4' /></>,
  sheets: <><P d='M1 2Q6 5 12 2V13Q6 16 1 13z' f='#7db1f0' s='#3f7bc8' /><P d='M10 9Q16 12 22 9V21Q16 24 10 21z' f='url(#orange)' s='#cf8a2c' /><P d='M17 3V7M5 16V20H9' s='#e0661c' w={2} /></>,
  patch: <><P d='M10 2Q16 8 23 9L14 22Q8 16 1 14z' f='#fce4e4' s='#b8322c' w={2} /><P d='M11 7Q14 10 18 11L13 17Q10 14 6 13zM9 10L16 14M14 9L10 15' f='#d9dcf8' s='#4a4aa4' /></>,
  roll: <><P d='M1 5Q9 0 22 3L20 11Q11 7 5 11z' f='#7cc0b4' s='#3f8878' /><P d='M5 11Q14 10 22 8V20L13 23V14z' f='#f9bc74' s='#e08a3c' /><O x={6} y={14} r={4} f='#f5c93c' s='#a8801c' /></>,
  cross: <><P d='M1 12H7V18L16 22 23 18V13L17 11V6' f='url(#blue)' s='#28559c' /><P d='M1 12H23V18L15 22 1 18z' f='url(#blue)' s='#5588d4' /><P d='M6 2H15V20L9 23V8z' f='#f9b894' s='#d4522c' /></>,
  boot: <><P d='M11 0H23V16L14 24H1L11 15z' f='url(#orange)' s='#e0761c' /><P d='M11 15L16 18 23 12M16 18L14 24' s='#c23c1c' /></>,
  fold: <><P d='M10 2L22 10 18 20 10 24 1 19Q9 12 10 2z' f='url(#blue)' /><P d='M10 2L24 5 17 12z' f='#cfe0ff' s='#8cacdc' /><P d='M10 1L19 13' s='#c8322c' w={2} /></>,
  sewBack: <><P d='M1 4Q6 1 11 4V22Q6 19 1 22z' f='url(#blueH)' s='#3f6fc4' /><P d='M13 4Q18 1 23 4V22Q18 19 13 22z' f='url(#blueH)' s='#3f6fc4' /><P d='M12 8V23' s='#d63a2c' dash='1 1' /><P d='M6 8Q8 0 14 2 18 5 15 9' s='#111' w={2} /><P d='M2 6L9 7 5 11z' f='#111' /></>,
  pin: <><P d='M1 7Q6 4 11 7V18Q6 15 1 18zM13 7Q18 4 23 7V18Q18 15 13 18z' f='#a9ccf5' s='#4f80c4' /><P d='M12 1V23' s='#b88a2c' w={2} /><Dots at={[[12, 3]]} c='#f0a41c' /><Dots at={[[12, 21]]} c='#777' /></>,

  chain2: <><P d='M1 10L8 4V20H1zM10 8H12V20H10z' f={Gray} /><O x={18} y={7} r={3} s={Gray} w={2} /><O x={18} y={16} r={4} s={Gray} w={2} /></>,
  back: <P d='M5 16H17Q21 15 20 10M9 12L4 16 9 20' s={Gray} w={3} />,
  snapBox: <><P d='M1 1H23V23H1z' f='#fbe4e0' s='#d6463c' w={2} /><P d='M10 3V20M3 11H18' s='#6b4a1c' w={2} /><P d='M10 11L22 13 18 22 14 20z' f='#f7c42c' s='#c4901c' /></>,
  boxWhite: <><P d='M2 12L9 5 19 7 22 12 14 21 4 19z' f='#e4eaf2' s='#4f5a6c' w={2} /><P d='M14 21V13L22 12M14 13L4 11' s='#4f5a6c' /><P d='M9 4L15 9' s='#c8322c' w={2} /></>,
  g1: <P d='M4 10L10 3 14 8M16 9V21M10 15H22' s={Gray} w={3} />,
  g2: <P d='M3 8L10 4 14 10M8 6L18 12V20H22' s={Gray} w={4} />,
  lasso: <><P d='M4 4H20V20H4z' s='#222' w={2} dash='3 2' /><Dots at={[[4, 4], [20, 20]]} /></>,
  snap: <><O x={15} r={4} s='#e0b41c' w={3} /><Dots at={[[15, 4], [15, 20], [8, 8], [8, 16], [22, 8], [22, 16], [15, 12]]} c='#444' /><P d='M0 2L5 6 0 9z' f='#2c9a3c' /><P d='M0 14L5 18 0 21z' f={Red} /></>,
  end: <><P d='M4 20L20 4' s='#333' w={2} /><Dots at={[[19, 5]]} /></>,
  mid: <><P d='M4 21L20 3' s='#333' w={2} /><Dots at={[[12, 12]]} r={3} /></>,
  ctrl: <><P d='M5 4Q12 4 12 12T20 21' s='#444' w={2} /><Dots at={[[5, 4]]} r={1} /></>,
  isect: <><P d='M12 3V22M3 18Q12 4 21 18' s='#333' w={2} /><Dots at={[[12, 11]]} r={3} /></>,
  center: <><O s='#333' w={2} r={9} /><Dots at={[[12, 12]]} r={2} /></>,
  quad: <><O s='#333' w={2} r={8} /><Dots at={[[12, 4], [12, 20], [4, 12], [20, 12]]} r={3} /></>,
  plus: <P d='M12 4V20M4 12H20' s='#333' w={2} />,
  onCrv: <><P d='M4 20L20 4' s='#333' w={2} /><Dots at={[[8, 16]]} r={3} /></>,
  face: <><P d='M4 8Q12 0 21 4L18 12Q20 20 12 21 4 16 4 8z' f='#a9cbf3' s='#3a5a94' w={2} /><Dots at={[[13, 8]]} r={3} /></>,
  cubeBlue: <Iso t='#e0effc' l='#8cc8f4' r='#2c78d4' s='#5b86c0' />,
  saveView: <><P d='M2 0H23V16H2z' f='#dbe8fb' s='#3b5ca4' w={2} /><P d='M2 0H23V5H2z' f='#3b6cc8' /><P d='M0 14H13V24H0z' f='#1d3372' /><P d='M13 19H24V24H13z' f='#1d3372' /></>,
  star: <><P d='M7 3H19V15H7z' f='#fdf0b0' s='#e8a87c' /><P d='M3 8L12 6 20 12 14 21 4 19z' f='#f8d878' s='#e49a5c' /><O x={11} y={13} r={3} f='#fff' /></>,
  mirror: <><P d='M5 9L12 6 18 9V19L11 23 5 19z' f='#c7ccf4' s='#5c64a4' /><P d='M8 1H13V11H8z' f='#8ea4d8' /><P d='M15 5L24 3 17 13z' f='#f06a5c' /></>,
  shape: <><P d='M2 2V22H22V18H6V2z' f='#f4c89c' s='#dd8c5c' /><P d='M9 5H20V15H9z' f='#fbe9e4' s='#c8523c' /></>,

  chain: <g fill='none' transform='rotate(-8 12 12)'><rect x='6' y='0' width='8' height='14' rx='4' stroke='#8c8420' strokeWidth='4' /><rect x='6' y='0' width='8' height='14' rx='4' stroke='#ddd45c' strokeWidth='2' /><rect x='11' y='10' width='8' height='14' rx='4' stroke='#8c8420' strokeWidth='4' /><rect x='11' y='10' width='8' height='14' rx='4' stroke='#ddd45c' strokeWidth='2' /></g>,
  l1: <><P d='M2 21L22 3' s={Axes} w={2} /><Dots at={[[2, 21], [22, 3]]} /></>,
  l2: <><P d='M9 15V2M9 15L20 10' s='#8b9a8b' w={2} /><P d='M3 16L20 23' s={Axes} w={2} /><P d='M9 15L22 20' s={Red} /><Dots at={[[3, 16], [21, 20]]} /><Dots at={[[9, 2], [21, 9]]} c='#8b9a8b' /></>,
  l3: <><P d='M3 18L20 2' s={Axes} w={2} /><P d='M8 23L23 8' s={Red} dash='2 1' w={2} /><Dots at={[[3, 18]]} /></>,
  l4: <><P d='M2 11L23 18' s={Axes} w={2} /><P d='M16 0L9 24' s={Red} dash='2 1' w={2} /><Dots at={[[2, 11]]} /></>,
  l5: <><P d='M2 15L16 6' s={Axes} w={2} /><O x={18} y={10} r={5} s={Red} dash='2 1' w={2} /><Dots at={[[2, 15]]} /></>,
  l6: <><P d='M3 11L16 3' s={Axes} w={2} /><O x={18} y={8} r={5} s={Red} dash='2 1' w={2} /><O x={5} y={16} r={5} s={Red} dash='2 1' w={2} /></>,
  l7: <><P d='M2 3L20 2 21 21 3 22z' f='url(#paleblue)' s='#2c5f9c' w={2} /><P d='M7 1V23M16 1V23M0 9H22M0 16H23' s='#28407c' /><Dots at={[[7, 1], [0, 9], [23, 15], [7, 23]]} r={1} /></>,
  a1: <><P d='M4 4Q18 6 20 20' s={Axes} w={2} /><Dots at={[[4, 4], [15, 9], [20, 20]]} /></>,
  a2: <><P d='M4 4Q18 6 20 20' s={Axes} w={2} /><P d='M3 -1L12 6M16 12L24 20' s={Red} dash='2 1' /><Dots at={[[4, 4], [19, 20]]} /></>,
  a3: <><P d='M12 2Q20 3 20 11T12 21' s={Axes} w={2} /><P d='M0 2H24M0 21H24M20 0V24' s={Red} dash='2 1' /></>,
  a4: <><P d='M12 2Q20 3 20 11M10 13L17 5' s={Axes} w={2} /><P d='M0 2H24M20 0V24' s={Red} dash='2 1' /><Dots at={[[16, 6]]} /></>,
  c1: <><O s={Axes} w={2} r={10} /><Dots at={[[12, 2], [18, 5], [22, 12]]} /><Dots at={[[12, 12]]} c={Axes} r={1} /></>,
  c2: <><O s={Axes} w={2} x={10} y={13} r={10} /><P d='M8 -1L24 14' s={Red} dash='2 1' /><Dots at={[[8, 4], [19, 15]]} /><Dots at={[[10, 13]]} c={Axes} r={1} /></>,
  c3: <><O s={Axes} w={2} x={10} y={12} r={10} /><P d='M0 2H24M0 22H24M20 0V24' s={Red} dash='2 1' /><Dots at={[[10, 12]]} c={Axes} r={1} /></>,
  c4: <><O s={Axes} w={2} x={10} y={12} r={10} /><P d='M0 2H24M20 0V24' s={Red} dash='2 1' /><P d='M10 12L17 5' s={Red} w={2} /></>,
  c5: <><O s={Axes} w={2} r={10} /><Dots at={[[12, 12], [22, 12]]} /></>,
  c6: <><O s={Axes} w={2} r={10} /><P d='M12 12L18 6' s={Red} w={3} /><Dots at={[[12, 12]]} /></>,
  c7: <><O s={Axes} w={2} x={10} y={14} r={10} /><P d='M8 -1L24 14' s={Red} dash='2 1' /><Dots at={[[10, 14]]} /></>,

  sketch: <><P d='M3 7H20L24 23H0z' f='#fff' s='#2b3f8c' w={2} /><P d='M5 12H10V20H4zM14 12H17L20 20H13z' f='#fff' s='#2b3f8c' /><P d='M6 0L8 5 13 4 9 8 11 12 6 10 2 12 3 7 0 4 4 4z' f='#f5e23c' /><P d='M20 3L23 5 17 14 14 14z' f='#f0a43c' s='#a4641c' /></>,
  finish: <><P d='M-1 -1H25V25H-1z' f='#8ca0aa' /><P d='M3 6L19 3 18 14 6 17z' f='#7c868b' /><P d='M4 8L18 5M6 13L18 10M9 5L11 16M14 4L15 15' s='#939fa4' w={2} /><P d='M3 5L9 20' s='#747d81' w={2} /></>,
  profile: <><P d='M2 1V15Q2 20 7 20T13 15V9Q13 5 18 5T23 9V14' s='#222' w={2} /><Dots at={[[2, 14], [13, 14], [23, 14]]} /></>,
  lineB: <><P d='M2 21L20 3' s='#222' w={2} /><Dots at={[[2, 21], [20, 3]]} /></>,
  corner: <P d='M3 0V24M0 3H22M3 3L24 24M3 18H24' s='#8a8a8a' w={2} />,
  circle: <O r={11} s='#222' w={2} />,
  fillet: <><P d='M0 1H12Q22 2 22 24' s={Gray} w={2} /><P d='M12 1H22V14' s='#bbb' dash='2 1' /></>,
  cham: <><P d='M0 1H11L22 12V24' s={Gray} w={2} /><P d='M12 1H22V12' s='#bbb' dash='2 1' /></>,
  rectB: <><P d='M1 5H23V19H1z' s='#222' w={2} /><Dots at={[[1, 5], [23, 19]]} /></>,
  cross1: <P d='M12 3V21M3 12H21' s='#222' w={2} />,
  offG: <P d='M1 23V9L8 1H15L16 6Q24 9 24 15 22 23 15 23zM5 19V11L10 6 12 10Q20 11 20 15 19 19 14 19z' s={Gray} w={2} />,
  t1: <><P d='M0 13H13M5 0L15 23' s={Gray} w={2} /><P d='M14 10L20 5 24 9 19 15z' f='#858585' /></>,
  t2: <><P d='M0 13H13M5 0L15 23' s={Gray} w={2} /><P d='M12 12L22 1 24 4 15 14z' f='#858585' /></>,
  t3: <P d='M0 11H22M14 0V23M8 5L22 16' s={Gray} w={2} />,
  dim: <><P d='M1 1V12M23 1V12M1 5H23M4 3L1 5 4 7M20 3L23 5 20 7' s={Gray} w={2} /><P d='M10 3L17 6 13 10 18 9 3 23 9 12 6 11z' f='#9a9a72' /></>,
  cons: <P d='M0 14L10 3M4 15L14 4M18 9V19M11 19H24' s={Gray} w={2} />,
  sym: <><P d='M2 3V22H22V3' s='#a0686c' w={2} /><P d='M2 3H8V9H17V3H22' s='#777' w={2} /><P d='M12 1V24' s='#666' dash='4 2' /><Dots at={[[2, 2], [22, 2]]} c='#a0686c' /></>,
  consB: <><P d='M1 7L8 12 1 17z' f='#858585' /><P d='M10 10L19 1M14 12L23 2M18 13V23M11 23H24' s={Gray} w={2} /></>,
  conv: <><P d='M1 1H12V11H1z' s={Gray} w={2} /><P d='M10 13H24V24H10z' s={Gray} w={2} /><P d='M0 16H9V25H0z' f='#909090' /><P d='M11 14L19 4 22 7 15 15z' f='#909090' /></>,

  tAsm: <><P d='M6 0L11 1V8L6 10 2 8V2zM1 6L6 5 9 7V12L4 13 0 11z' f='#f7c82c' s='#c4901c' /><P d='M10 3L14 4V10L10 12 7 10V5z' f='#fbe07c' s='#c4901c' /><P d='M14 17L18 15 23 17V21L18 24 13 22z' f='#f7c82c' s='#c4901c' /><P d='M6 14V24M6 18H12' s='#2c3cb0' w={2} /><P d='M15 12H24' s='#111' w={2} /></>,
  tPart: <><P d='M0 2Q5 -1 11 2V8Q5 11 0 8z' f='#e45ca4' s='#9c2468' /><ellipse cx='6' cy='2' rx='5' ry='2' fill='#f8c4e0' /><P d='M6 12V24M6 18H12' s='#2c3cb0' w={2} /><P d='M14 8H23' s='#111' w={2} /><O x={18} y={19} r={5} f='#f8dcea' s='#a42c6c' w={2} /><Dots at={[[18, 19]]} c='#a42c6c' /></>,
  tBooks: <><P d='M0 8L7 3H13L8 8V22H0z' f='url(#orange)' s='#c4601c' /><P d='M7 8L13 3H19L14 8V22H7z' f='#3cae3c' s='#1c6c1c' /><P d='M14 8L20 3H26V17L20 22H14z' f='#3b84e0' s='#1c4fa4' /><P d='M1 8L7 3H12L7 8zM8 8L14 3H18L14 8zM15 8L21 3H25L20 8z' f='#f4f4f4' /></>,
  tInfo: <><O x={8} y={16} r={8} f='#2c78d8' s='#164a94' /><P d='M7 11H9V13H7zM6 14H9V19H11V21H5V19H6z' f='#fff' /><P d='M10 5Q19 6 19 16M9 1Q24 2 24 17' s='#3b6cc8' w={2} /></>,
  tWeb: <><P d='M2 1H16L22 6V24H2z' f='#eef4fd' s='#3b62a8' w={2} /><O x={12} y={15} r={6} f='#3c8cc8' /><P d='M6 14Q8 9 13 10L11 14 8 19zM15 10L18 14 15 19 13 15z' f='#3ca44c' /></>,
  tClock: <><O r={11} f='#e4ecf8' s='#6c7484' w={2} /><P d='M12 4V13H20' s='#111' w={2} /><Dots at={[[12, 20], [4, 12], [6, 6], [18, 18], [6, 18]]} c='#667' r={1} /></>,
  tPal: <><P d='M1 4L7 2V22L1 20z' f='#eee' s='#666' /><P d='M8 3H24V21H8z' f='#fff' s='#555' /><Dots at={[[12, 7]]} c='#2c5cc8' /><Dots at={[[12, 12]]} c='#2c9a3c' /><Dots at={[[12, 17]]} /><P d='M16 7H22M16 12H22M16 17H22' s='#777' /></>,
  tRainbow: <><P d='M1 1H11V23H1z' f='url(#rainbow)' /><P d='M11 6L22 23' s='#111' w={3} /><O x={11} y={6} r={3} f='#fff' /></>,
  tWand: <><P d='M3 2H11V19H3z' f='#3b84d8' /><P d='M3 6H11M3 10H11M3 14H11' s='#a4ccf4' /><P d='M12 10L24 5M12 13L24 9M12 6H24' s='#7c9cc8' /><P d='M12 8L21 22' s='#111' w={3} /><P d='M1 22H14' s='#a4c43c' w={2} dash='3 2' /></>,
  tPeople: <><O x={18} y={5} r={5} f='#e8a44c' /><P d='M10 18Q11 11 18 11 25 11 25 18z' f='#2c8c3c' /><O x={7} y={12} r={5} f='#d89c80' s='#7c4c3c' w={2} /><P d='M0 24Q1 17 7 17T14 24z' f='#9c6cdc' /></>,
  tPic: <><P d='M0 3H24V21H0z' f='#3b84d4' s='#1c3c7c' /><P d='M0 21V18Q6 7 12 14 17 11 24 20V21z' f='#e8ecf8' s='#8c94b4' /><O x={19} y={7} r={3} f='#f7e43c' /></>,
  tRoll: <><P d='M0 3H24V23H0z' f='#f4f8ff' s='#9cb4d4' /><P d='M5 4H18V8H5zM4 15H20V19H4zM8 8V15M15 8V15M8 11H15M7 19V21M17 19V21' f='none' s='#4b5c8c' w={2} /></>,
  full: <><P d='M1 6V1H6M18 1H23V6M23 18V23H18M6 23H1V18' s='#333' w={2} /><P d='M5 5H19V19H5z' f='#fff' s='#333' w={2} /><P d='M7 9H17V17H7z' f='#3b7cd8' /></>,
  app: <><P d='M2 8L12 3 22 9 23 15 13 22 4 19z' f='#3b78d8' s='#173a84' /><P d='M4 4L12 6V20L4 23z' f='#1f4aa8' /><P d='M12 10L23 12 13 22z' f='#8cb8f4' /></>
}

const Icon = ({ name, size = 24 }) => (
  <svg width={size} height={size} viewBox='0 0 24 24' overflow='visible' aria-hidden='true'>{ICONS[name]}</svg>
)

const Caret = ({ c = '#111', w = 7 }) => (
  <svg width={w} height={Math.ceil(w / 2)} viewBox='0 0 8 4' aria-hidden='true'><path d='M0 0H8L4 4z' fill={c} /></svg>
)

const Gradient = ({ id, from, to, flat }) => (
  <linearGradient id={id} x1='0' y1='0' x2={flat ? 1 : 0.4} y2={flat ? 0 : 1}>
    <stop stopColor={from} />
    <stop offset='1' stopColor={to} />
  </linearGradient>
)

const Defs = () => (
  <svg width='0' height='0' style={{ position: 'absolute' }} aria-hidden='true'>
    <defs>
      <Gradient id='blue' from='#9ccaff' to='#2f68e0' />
      <Gradient id='blueD' from='#8cc8f8' to='#2474d0' />
      <Gradient id='blueH' from='#ccdcff' to='#5580e8' flat />
      <Gradient id='paleblue' from='#f2f8ff' to='#8cb8ee' />
      <Gradient id='orange' from='#ffdf5a' to='#f28a1c' />
      <Gradient id='paper' from='#ffffff' to='#cbd8f8' />
      <Gradient id='globe' from='#4cc8f0' to='#1c6cc4' />
      <radialGradient id='ball' cx='.4' cy='.3'><stop stopColor='#fff6a8' /><stop offset='1' stopColor='#e8b81c' /></radialGradient>
      <linearGradient id='rainbow' x1='0' y1='0' x2='0' y2='1'>
        <stop stopColor='#e42c1c' /><stop offset='.3' stopColor='#f4e42c' /><stop offset='.6' stopColor='#2cc84c' /><stop offset='1' stopColor='#1c3ce4' />
      </linearGradient>
    </defs>
  </svg>
)

/* ascii runs keep the fixed pitch of the system font, (X) gets its mnemonic underlined */
const Txt = ({ children, big }) => children.split(/([\x20-\x7e]+)/).filter(Boolean).map((part, i) => {
  if (!/^[\x20-\x7e]/.test(part)) return part
  const m = part.match(/^\((\w)\)(.*)$/)
  return <Latin key={i} $big={big}>{m ? <>(<u>{m[1]}</u>){m[2]}</> : part}</Latin>
})

const Tools = ({ items, small }) => items.map((item, i) => {
  if (item === '|') return <Sep key={i} $short={small} />
  if (item === ':') return <Grip key={i} />
  if (item === 'v') return <Drop key={i} aria-label='更多'><Caret /></Drop>
  if (item === '_') return <Drop key={i} $low aria-label='工具条选项'><Caret /></Drop>
  const t = typeof item === 'string' ? { icon: item } : item
  return (
    <Tool key={i} $small={small} $on={t.on} $text={!!t.text} $dim={t.dim} aria-label={t.text || t.icon}>
      {t.icon && <Icon name={t.icon} size={small ? 18 : 24} />}
      {t.text && <Caption $gap={t.gap}><Txt>{t.text}</Txt></Caption>}
    </Tool>
  )
})

const menus = ['文件(F)', '编辑(E)', '视图(V)', '插入(S)', '格式(R)', '工具(T)', '装配(A)', '信息(I)', '分析(L)',
  '首选项(P)', '窗口(O)', 'GC工具箱', '燕秀UG模具6.32', '帮助(H)']

const rows = [
  { pad: 5, groups: [
    { items: [':', { icon: 'logo', text: '开始' }, 'v', 'doc', 'open', 'save', '|', 'cut', '|', 'undo', 'redo', '|', { icon: 'find', text: '命令查找器' }, '|', 'reattach', 'swap', '|', 'info', '_'] },
    { gap: 36, items: [':', 'fit', 'v', 'zoom', 'pan', 'rotate', 'boxdot', 'persp', 'v', 'shaded', 'v', 'wireA', 'wireB', 'wireC', 'section', 'grayCube', 'v', 'blackFrame', 'v', '_'] },
    { gap: 16, items: [':', 'sMove', 'sPull', 'sCopy', 'sCyl', 'sReplace', 'sDim', 'sPattern', 'sTilt', 'v', 'sDel', 'sRed', '_'] }
  ] },
  { groups: [
    { items: [':', 'sheet', 'v', 'extrude', 'revolve', 'tube', 'nx5', 'holeBox', 'emboss', 'offset', 'sphere', 'cylinder', 'block', 'cone', '|', 'pullup', 'boxholes', 'sew', 'split', 'pocket', 'gem', 'blend', 'chamfer', 'sweep', 'trim', 'sub', 'domeA', 'domeB', 'domeC', 'cylPair', 'slab', '|', 'slabs', 'sweep', 'unite', 'v', 'minus', 'inter', '_'] },
    { items: [':', 'wrench', 'crvA', 'crvB', 'crvC', 'crvD', 'crvE', 'crvF', 'crvG', '_'] }
  ] },
  { groups: [
    { items: [':', 'layers', '|', 'visual', 'select', 'hideA', 'hideB', '|', 'hideC', '|', 'ruler', 'angle', 'grid', '_'] },
    { gap: 16, items: [':', 'line', 'arc', 'rect', 'spline', 'text', 'offsetCrv', 'projA', 'projB', 'projC', 'projD', 'press', 'cylArc', 'planeA', 'planeB', '_'] },
    { gap: 20, items: [':', 'surfA', 'surfB', 'surfC', 'surfD', 'mesh', 'meshB', 'scroll', 'sheets', 'patch', 'trim', 'roll', 'cross', 'boot', 'fold', 'sew', 'sewBack', 'pin', '_'] }
  ] }
]

const snapTools = ['chain2', '|', 'back', 'snapBox', 'v', 'boxWhite', 'g1', 'g2', '|', 'lasso', 'v',
  { icon: 'snap', on: true }, { icon: 'end', on: true }, { icon: 'mid', on: true }, 'ctrl', 'isect',
  { icon: 'center', on: true }, 'quad', { icon: 'plus', on: true }, { icon: 'onCrv', on: true }, 'face', '|',
  { icon: 'cubeBlue', on: true }, { text: '保存(S)', gap: 1 },
  'saveView', 'ruler', 'star', 'angle', { icon: 'mirror', text: '设置镜像平面(L)...', gap: 8 },
  { icon: 'shape', text: '形状(S)', gap: 8 }, 'v']

const sideGroups = [
  ['l1', 'l2', 'l3', 'l4', 'l5', 'l6', 'l7'],
  ['a1', 'a2', 'a3', 'a4'],
  ['c1', 'c2', 'c3', 'c4'],
  ['c5', 'c6', 'c7']
]

const tabGroups = [['tAsm', 'tPart', 'tBooks'], ['tInfo'], ['tWeb'], ['tClock', 'tPal', 'tRainbow', 'tWand', 'tPeople', 'tPic', 'tRoll']]

const sketchTools = [':', 'sketch', { icon: 'finish', text: '完成草图', dim: true }, 'profile', 'lineB', 'corner', 'a1', 'circle', 'fillet', 'cham', 'rectB', 'spline', 'cross1', 'offG', 'v', 'corner', '|', 't1', 't2', 't3', '|', 'dim', 'v', '|', 'cons', 'sym', 'consB', 'v', '|', 'conv', '_']

const combos = [
  { label: '类型过滤器', value: '全部', w: 49 },
  { label: '选择过滤器', value: '没有选择过滤器', w: 120 },
  { label: '选择范围', value: '整个装配', w: 127 }
]

/* ---------- model ---------- */

const BODY = 'M40 862H470Q542 850 562 760 604 600 622 380 628 300 625 215 642 88 745 78 1000 76 1120 108 1320 158 1430 225 1488 268 1493 350V540Q1490 600 1450 628 1404 668 1388 700L1330 800 1285 865 1205 1010 1110 1170Q1040 1290 960 1356 860 1446 710 1470 600 1478 40 1495z'

const Model = () => (
  <Part width='640' height='530' viewBox='0 0 1568 1568' preserveAspectRatio='none' role='img' aria-label='52373453.prt'>
    <defs>
      <clipPath id='body'><path d={BODY} /></clipPath>
      <linearGradient id='wall' gradientUnits='userSpaceOnUse' x1='40' x2='1040' y1='0' y2='0'>
        <stop stopColor='#a4a23f' /><stop offset='.09' stopColor='#a09f3d' /><stop offset='.17' stopColor='#86852c' />
        <stop offset='.36' stopColor='#8a8930' /><stop offset='.5' stopColor='#979636' /><stop offset='.6' stopColor='#a09f3c' /><stop offset='.7' stopColor='#9e9d3a' /><stop offset='.8' stopColor='#979633' />
      </linearGradient>
      <linearGradient id='lip' x1='0' y1='0' x2='0' y2='1'>
        <stop stopColor='#8f8e30' /><stop offset='.3' stopColor='#a8a739' /><stop offset='.6' stopColor='#b5b43e' /><stop offset='1' stopColor='#9a9934' stopOpacity='0' />
      </linearGradient>
      <linearGradient id='rim' x1='0' y1='0' x2='0' y2='1'>
        <stop stopColor='#9a9934' /><stop offset='.2' stopColor='#a8a73a' /><stop offset='.32' stopColor='#b6b545' /><stop offset='.4' stopColor='#969532' /><stop offset='1' stopColor='#9b9a36' />
      </linearGradient>
      <filter id='soft' x='-30%' y='-30%' width='160%' height='160%'><feGaussianBlur stdDeviation='9' /></filter>
      <filter id='mid' x='-60%' y='-90%' width='220%' height='280%'><feGaussianBlur stdDeviation='15' /></filter>
      <filter id='softer' x='-60%' y='-60%' width='220%' height='220%'><feGaussianBlur stdDeviation='28' /></filter>
    </defs>
    <path fill='url(#rim)' d='M60 828H197L200 838 204 825H255V838L298 829H470Q535 820 548 700L552 662 548 660 558 588 572 582 598 340V247H618V200Q635 90 740 75L765 73V50H890Q1000 55 1055 72L1060 68 1118 83 1122 92 1130 88Q1300 130 1420 182 1510 230 1517 320V545Q1510 620 1465 655L1422 694 1335 838H1345Q1362 842 1364 860V1005Q1362 1025 1340 1029H1222L1208 1050 1172 1116 1165 1112 1110 1205Q1060 1300 1000 1360 860 1490 700 1505 500 1515 240 1520L197 1508V1527H148V1508H140L135 1525H60V1495H40V862H60z' />
    <path d='M622 340Q615 480 585 640 560 800 490 835' fill='none' stroke='#bfbe48' strokeWidth='12' />
    <path d={BODY} fill='url(#wall)' />
    <g clipPath='url(#body)'>
      <path d='M0 850H520L600 800 640 880 560 990H0z' fill='url(#lip)' filter='url(#soft)' />
      <path d='M500 930Q600 900 620 790' stroke='#bab944' strokeWidth='60' fill='none' filter='url(#softer)' />
      <path d='M500 960Q620 940 625 800' stroke='#bdbc48' strokeWidth='20' fill='none' filter='url(#mid)' />
      <ellipse cx='130' cy='930' rx='90' ry='34' fill='#bfbe48' filter='url(#softer)' />
      <ellipse cx='80' cy='943' rx='62' ry='20' fill='#f4f384' filter='url(#mid)' />
      <ellipse cx='560' cy='922' rx='40' ry='20' fill='#fbfa90' filter='url(#mid)' transform='rotate(-28 560 922)' />
      <path d='M-100 1515H200Q600 1500 720 1488 860 1460 970 1370L1010 1330' fill='none' stroke='#33330e' strokeWidth='130' filter='url(#softer)' />
      <path d='M800 1490Q960 1430 1110 1190L1205 1020 1285 880 1400 690' fill='none' stroke='#38370f' strokeWidth='95' filter='url(#softer)' />
      <path d='M1290 850L1400 680 1500 590V330' fill='none' stroke='#5a591e' strokeWidth='48' filter='url(#mid)' />
      <path d='M625 215Q632 420 604 560 585 690 560 790' fill='none' stroke='#68671f' strokeWidth='40' filter='url(#mid)' />
      <path d='M650 205L735 95Q1000 75 1120 110 1310 158 1420 232 1452 270 1452 350V510Q1350 560 1250 735H800Q740 750 690 768 630 760 615 720 640 520 655 400z' fill='#bcbd44' filter='url(#mid)' />
      <path d='M675 190L730 150 1100 112 1400 235 1430 350V500L1230 715H800L690 735 650 690 670 400z' fill='#bcbd44' filter='url(#soft)' />
      <path d='M742 84Q1000 78 1060 112L720 158z' fill='#b4b43f' />
      <path d='M640 745Q670 765 700 758 750 740 800 730' fill='none' stroke='#c6c54e' strokeWidth='14' filter='url(#soft)' />
      <path d='M1240 732Q1290 715 1345 630 1380 575 1462 530' fill='none' stroke='#f2f17e' strokeWidth='32' filter='url(#mid)' />
      <path d='M1462 320V530' fill='none' stroke='#c8c750' strokeWidth='20' filter='url(#soft)' />
      <path d='M638 208Q650 90 745 82 725 145 638 208z' fill='#9c9b36' />
      <path d='M745 84Q725 145 638 208' fill='none' stroke='#8a8930' strokeWidth='5' filter='url(#soft)' />
    </g>
    <path d='M1432 248L1472 285 1462 305 1450 300z' fill='#a5a43a' stroke='#7c7b28' strokeWidth='3' />
    <path d='M1440 256L1462 284 1450 284z' fill='#bcbd44' />
    <path d='M1285 865L1312 830 1345 842 1364 862V1005L1340 1029H1200z' fill='#9a9935' />
    <path d='M1250 858L1268 830H1320L1290 858zM1150 1030L1165 1002H1222L1205 1030z' fill='#a5a43c' />
    <path d='M1250 858H1288M1150 1030H1196M1335 858Q1352 862 1354 878V975M1354 990V1005' stroke='#6b6a24' strokeWidth='3' fill='none' />
    <path d='M1202 1046L1166 1108M572 586L564 655M552 660H562M622 200V242' stroke='#4f4e1a' strokeWidth='3' fill='none' />
    <path d='M262 838L298 828V840zM197 1508L242 1506V1520zM140 1510H197' fill='#6b6a24' stroke='#6b6a24' strokeWidth='2' />
  </Part>
)

export default function App () {
  return (
    <Page>
      <GlobalStyle />
      <Defs />
      <Frame>
        <TitleBar>
          <Icon name='logo' size={17} />
          <Title>
            你只管精彩，结局自有安排<TitleLatin> - </TitleLatin>建模<TitleLatin> - [52373453.prt </TitleLatin>（修改的）<TitleLatin> ]</TitleLatin>
          </Title>
          <Tail>s</Tail>
          <WinButton aria-label='最小化'><svg width='12' height='12'><path d='M2 9H9' stroke='#fff' strokeWidth='3' /></svg></WinButton>
          <WinButton aria-label='最大化'><svg width='14' height='14'><path d='M1 1H13V13H1zM1 3H13' fill='none' stroke='#fff' strokeWidth='2' /></svg></WinButton>
          <WinButton $close aria-label='关闭'><svg width='14' height='14'><path d='M2 2L12 12M12 2L2 12' stroke='#fff' strokeWidth='2' /></svg></WinButton>
        </TitleBar>
        <Upload>
          <UploadLogo>
            <svg width='22' height='18' viewBox='0 0 22 18'>
              <g fill='none' stroke='#fff' strokeWidth='3'><circle cx='6' cy='11' r='4' /><circle cx='16' cy='11' r='4' /><path d='M7 3Q11 -1 15 3L9 9' /></g>
            </svg>
          </UploadLogo>
          拖拽上传
        </Upload>

        <MenuBar>
          <Icon name='app' size={20} />
          {menus.map((m, i) => <MenuItem key={m} $first={i === 0}><Txt>{m}</Txt></MenuItem>)}
          <Spacer />
          <MdiButton aria-label='最小化'><svg width='12' height='12'><path d='M2 10H9' stroke='#555' strokeWidth='2' /></svg></MdiButton>
          <MdiButton aria-label='还原'><svg width='12' height='12'><path d='M1 5H8V11H1zM1 6H8M4 4V1H11V8H9M4 2H11' fill='none' stroke='#555' /></svg></MdiButton>
          <MdiButton aria-label='关闭'><svg width='12' height='12'><path d='M2 2L10 10M10 2L2 10' stroke='#555' strokeWidth='3' /></svg></MdiButton>
        </MenuBar>

        <Rows>
          {rows.map((r, i) => (
            <Row key={i} $pad={r.pad}>
              {r.groups.map((g, j) => <Group key={j} $gap={g.gap}><Tools items={g.items} /></Group>)}
            </Row>
          ))}
        </Rows>

        <SelectBar>
          {combos.map(c => (
            <Combo key={c.label} $w={c.w}>
              <Select aria-label={c.label}><option>{c.value}</option></Select>
              <ComboArrow><Caret w={12} c='#10253c' /></ComboArrow>
            </Combo>
          ))}
          <Tools small items={snapTools} />
          <Spacer />
          <Drop $low aria-label='工具条选项'><Caret /></Drop>
        </SelectBar>

        <StatusBar>
          <Prompt><Txt big>选择对象并使用 MB3，或者双击某一对象</Txt></Prompt>
          <Divider />
          <Spacer />
          <Divider $after={20} />
          <Divider $after={37} />
          <Tool $small aria-label='完成'><Icon name='finish' size={18} /></Tool>
          <Tool $small aria-label='全屏显示'><Icon name='full' size={16} /></Tool>
        </StatusBar>

        <Work>
          <Side>
            <SideTools>
              <SideGrip />
              <Tool $on aria-label='关联'><Icon name='chain' /></Tool>
              {sideGroups.map((g, i) => (
                <React.Fragment key={i}>
                  <SideSep />
                  <Tools items={g} />
                </React.Fragment>
              ))}
              <SideMore><svg width='4' height='7'><path d='M4 0V7L0 4z' /></svg></SideMore>
            </SideTools>
          </Side>
          <Canvas>
            <Model />
            <LineV />
            <LineH />
            <Pointer width='70' height='70' viewBox='-35 -35 70 70'>
              <path d='M0 -35V35M-35 0H35' stroke='#b7b8ba' strokeWidth='4' />
              <circle r='31' fill='#bab53b' />
              <circle r='13' fill='none' stroke='#3c3a18' strokeWidth='3' strokeDasharray='14 6' strokeDashoffset='-3' />
              <circle r='13' fill='none' stroke='#f0eecb' strokeWidth='1' strokeDasharray='14 6' strokeDashoffset='-3' />
              <path d='M-17 0H17M0 -17V17' stroke='#222' strokeWidth='4' />
              <path d='M-16 0H16M0 -16V16' stroke='#b4b28c' strokeWidth='2' />
            </Pointer>
            <Triad width='60' height='60' viewBox='0 0 60 60' fontFamily='Liberation Sans, sans-serif' fontWeight='700' fontSize='10'>
              <rect x='27' y='28' width='25' height='25' fill='#d5d6d7' stroke='#a8abac' strokeWidth='2' />
              <path d='M52 52V20' stroke='#c33a34' strokeWidth='2' />
              <path d='M52 12L49 24H55z' fill='#b52a26' />
              <path d='M10 53L22 50V56z' fill='#1f7a2c' />
              <path d='M20 53H28' stroke='#1f7a2c' strokeWidth='2' />
              <path d='M49 50H55V57H49z' fill='#1436e0' />
              <text x='49' y='10' fill='#c33a34'>X</text>
              <text x='2' y='57' fill='#2c9a3c'>Y</text>
            </Triad>
          </Canvas>
          <Strip />
          <Tabs>
            {tabGroups.map(g => g.map((t, i) => (
              <Tab key={t} $last={i === g.length - 1} aria-label={t}><Icon name={t} /></Tab>
            )))}
          </Tabs>
        </Work>

        <Bottom>
          <Group><Tools items={sketchTools} /></Group>
        </Bottom>
      </Frame>
    </Page>
  )
}
